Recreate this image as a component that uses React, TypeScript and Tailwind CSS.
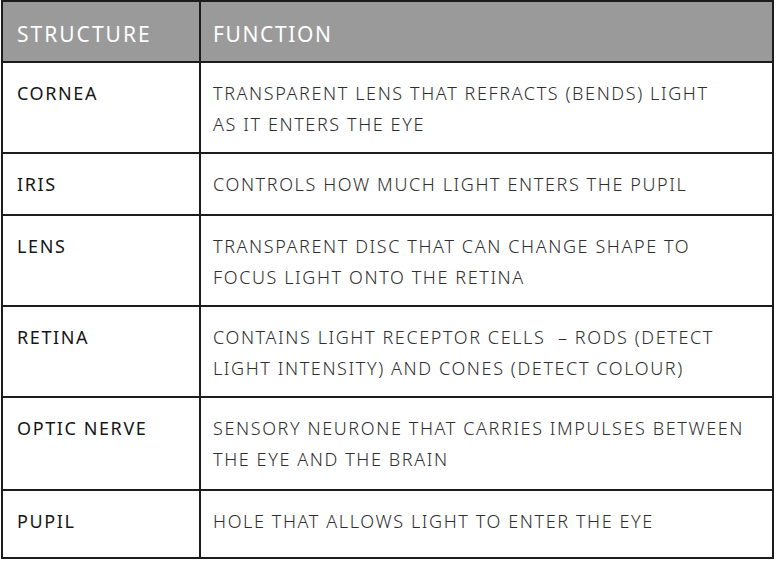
const rows: { structure: string; fn: string[]; h: string }[] = [
  { structure: "CORNEA", fn: ["TRANSPARENT LENS THAT REFRACTS (BENDS) LIGHT", "AS IT ENTERS THE EYE"], h: "h-[91px]" },
  { structure: "IRIS", fn: ["CONTROLS HOW MUCH LIGHT ENTERS THE PUPIL"], h: "h-[62px]" },
  { structure: "LENS", fn: ["TRANSPARENT DISC THAT CAN CHANGE SHAPE TO", "FOCUS LIGHT ONTO THE RETINA"], h: "h-[91px]" },
  { structure: "RETINA", fn: ["CONTAINS LIGHT RECEPTOR CELLS  \u2013 RODS (DETECT", "LIGHT INTENSITY) AND CONES (DETECT COLOUR)"], h: "h-[91px]" },
  { structure: "OPTIC NERVE", fn: ["SENSORY NEURONE THAT CARRIES IMPULSES BETWEEN", "THE EYE AND THE BRAIN"], h: "h-[93px]" },
  { structure: "PUPIL", fn: ["HOLE THAT ALLOWS LIGHT TO ENTER THE EYE"], h: "h-[68px]" },
];

export default function App() {
  return (
    <div className="h-[566px] w-[777px] bg-white pl-px font-['Noto_Sans',sans-serif]">
      <table className="w-[773px] table-fixed border-collapse border-2 border-[#1c1c1c]">
        <colgroup>
          <col className="w-[198px]" />
          <col />
        </colgroup>
        <thead>
          <tr className="h-[61px] bg-[#9a9a9a] text-[21px] text-white">
            <th className="border-2 border-[#1c1c1c] pl-[14px] pt-[6px] text-left font-normal tracking-[2px]">STRUCTURE</th>
            <th className="border-2 border-[#1c1c1c] pl-[12px] pt-[6px] text-left font-normal tracking-[1.6px]">FUNCTION</th>
          </tr>
        </thead>
        <tbody>
          {rows.map((r) => (
            <tr key={r.structure} className={r.h}>
              <td className="border-2 border-[#1c1c1c] pl-[14px] pt-[15px] align-top text-[18px] leading-[31px] tracking-[1.6px] text-[#161616]">
                {r.structure}
              </td>
              <td className="border-2 border-[#1c1c1c] pl-[12px] pt-[15px] align-top text-[18px] leading-[31px] font-light tracking-[1.6px] text-[#2e2e2e]">
                {r.fn.map((l) => (
                  <div key={l} className="whitespace-pre">{l}</div>
                ))}
              </td>
            </tr>
          ))}
        </tbody>
      </table>
    </div>
  );
}
